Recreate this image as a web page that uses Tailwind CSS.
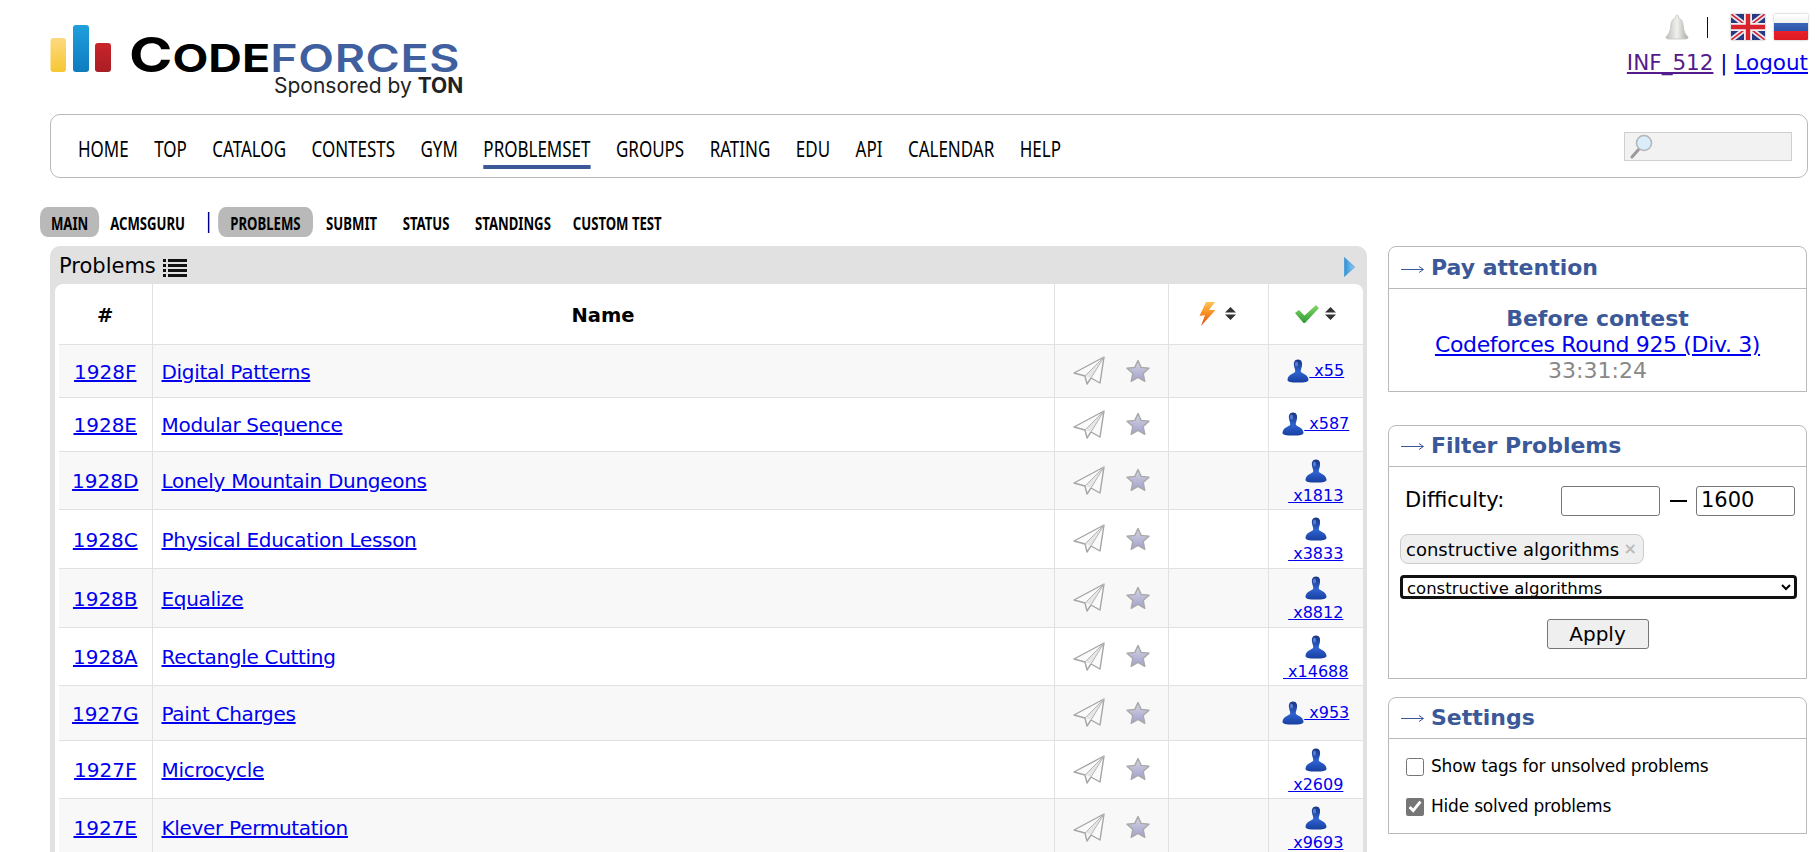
<!DOCTYPE html>
<html lang="en">
<head>
<meta charset="UTF-8" />
<title>Problemset - Codeforces</title>
<script src="https://cdn.jsdelivr.net/npm/@tailwindcss/browser@4"></script>
</head>
<body class="h-[852px] overflow-hidden bg-white text-black font-['DejaVu_Sans',Verdana,sans-serif]">

<!-- shared icons -->
<svg class="absolute w-0 h-0">
    <defs>
        <linearGradient id="gYellow" x1="0" y1="0" x2="0" y2="1"><stop offset="0" stop-color="#fdd97f"/><stop offset="1" stop-color="#f6c733"/></linearGradient>
        <linearGradient id="gBlue" x1="0" y1="0" x2="0" y2="1"><stop offset="0" stop-color="#1f9fdc"/><stop offset="1" stop-color="#0f7cbf"/></linearGradient>
        <linearGradient id="gRed" x1="0" y1="0" x2="0" y2="1"><stop offset="0" stop-color="#c9252b"/><stop offset="1" stop-color="#a81e24"/></linearGradient>
        <linearGradient id="gStar" x1="0" y1="0" x2="0" y2="1"><stop offset="0" stop-color="#d6d6df"/><stop offset="1" stop-color="#a0a0d0"/></linearGradient>
        <linearGradient id="gUser" x1="0" y1="0" x2="0" y2="1"><stop offset="0" stop-color="#173480"/><stop offset="0.55" stop-color="#2f62d0"/><stop offset="1" stop-color="#173f9f"/></linearGradient>
        <linearGradient id="gBolt" x1="0" y1="0" x2="0" y2="1"><stop offset="0" stop-color="#ffc45a"/><stop offset="0.5" stop-color="#f78a1e"/><stop offset="1" stop-color="#d9481a"/></linearGradient>
        <linearGradient id="gCheck" x1="0" y1="0" x2="0" y2="1"><stop offset="0" stop-color="#86d76c"/><stop offset="1" stop-color="#2f9a35"/></linearGradient>
        <linearGradient id="gBell" x1="0" y1="0" x2="1" y2="0"><stop offset="0" stop-color="#bdbdb9"/><stop offset="0.5" stop-color="#f0f0ee"/><stop offset="1" stop-color="#a9a9a5"/></linearGradient>
        <linearGradient id="gArrow" x1="0" y1="0" x2="1" y2="0"><stop offset="0" stop-color="#2f8fd8"/><stop offset="1" stop-color="#8ccdf5"/></linearGradient>
        <linearGradient id="gRu" x1="0" y1="0" x2="0" y2="1"><stop offset="0" stop-color="#fff"/><stop offset="0.33" stop-color="#f2f2f2"/><stop offset="0.34" stop-color="#3a66b8"/><stop offset="0.66" stop-color="#2b55a8"/><stop offset="0.67" stop-color="#e8202a"/><stop offset="1" stop-color="#dd1a22"/></linearGradient>
        <symbol id="plane" viewBox="0 0 32 29">
            <path d="M1 17 L31 1 L27 27 L18 22 L14 28 L12 20 Z" fill="#fafafa" stroke="#a5a5a5" stroke-width="1.4" stroke-linejoin="round"/>
            <path d="M12 20 L31 1 L18 22" fill="#e6e6e6" stroke="#b5b5b5" stroke-width="1"/>
        </symbol>
        <symbol id="star" viewBox="0 0 24 24">
            <path d="M12 1.5 L15.2 8.4 L23 9.3 L17.2 14.5 L18.8 22.3 L12 18.4 L5.2 22.3 L6.8 14.5 L1 9.3 L8.8 8.4 Z" fill="url(#gStar)" stroke="#a9a9a9" stroke-width="1.4" stroke-linejoin="round"/>
        </symbol>
        <symbol id="user" viewBox="0 0 22 24">
            <path d="M11 0.5 C14.5 0.5 15.5 3.5 15 6.5 C14.7 9 13.6 10.5 13.8 12.5 C14 14.5 21 15 21.5 20.5 C21.8 23 18 23.5 11 23.5 C4 23.5 0.2 23 0.5 20.5 C1 15 8 14.5 8.2 12.5 C8.4 10.5 7.3 9 7 6.5 C6.5 3.5 7.5 0.5 11 0.5 Z" fill="url(#gUser)"/>
            <ellipse cx="9.5" cy="5" rx="1.6" ry="2.6" fill="#6f93e6" opacity="0.7"/>
        </symbol>
        <symbol id="arrow" viewBox="0 0 23 9">
            <path d="M0 4.5 H22 M18 1.5 L22.5 4.5 L18 7.5" fill="none" stroke="#3b5998" stroke-width="1"/>
        </symbol>
    </defs>
</svg>

<div class="pl-[50px] pr-[10px] w-[1818px]">
    <!-- header -->
    <div class="flex justify-between h-[114px]">
        <div class="relative w-[420px]">
            <svg class="absolute left-0 top-[25px]" width="62" height="47" viewBox="0 0 62 47">
                <rect x="0.5" y="13" width="15.5" height="34" rx="3" fill="url(#gYellow)"/>
                <rect x="23" y="0" width="16" height="47" rx="3" fill="url(#gBlue)"/>
                <rect x="45" y="18" width="16" height="29" rx="3" fill="url(#gRed)"/>
            </svg>
            <div class="absolute left-[79px] top-[35px] origin-left scale-x-[1.225] flex items-baseline font-['Inter',sans-serif] leading-[40px] whitespace-nowrap">
                <span class="text-[48px] font-bold text-black">C</span><span class="text-[38px] font-bold text-black">ODE</span><span class="text-[38px] font-semibold text-[#3f5f9f] tracking-[0.5px]">FORCES</span>
            </div>
            <div class="absolute left-[224px] top-[74px] text-[21px] leading-[24px] font-['Inter',sans-serif] text-[#222] whitespace-nowrap">Sponsored by <b class="font-bold">TON</b></div>
        </div>
        <div class="flex flex-col items-end">
            <div class="flex items-center h-[40px] pt-[14px]">
                <svg width="24" height="26" viewBox="0 0 24 26">
                    <path d="M12 1 C13.2 1 13.5 2.5 13.4 4 C17 5 18 8 18.4 13 C18.7 17 20 20 23 23 C23.5 24 22 25 20 25 L4 25 C2 25 0.5 24 1 23 C4 20 5.3 17 5.6 13 C6 8 7 5 10.6 4 C10.5 2.5 10.8 1 12 1 Z" fill="url(#gBell)" stroke="#c4c4c0" stroke-width="0.8"/>
                </svg>
                <span class="w-[1px] h-[21px] bg-[#00008b] ml-[18px] mr-[23px]"></span>
                <svg class="rounded-[1px] shadow-[0_0_2px_#999]" width="34" height="26" viewBox="0 0 34 26">
                    <rect width="34" height="26" fill="#2a3a80"/>
                    <path d="M0 0 L34 26 M34 0 L0 26" stroke="#e8e8f0" stroke-width="5"/>
                    <path d="M0 0 L34 26 M34 0 L0 26" stroke="#d8222c" stroke-width="1.6"/>
                    <path d="M17 0 V26 M0 13 H34" stroke="#eef0f4" stroke-width="8"/>
                    <path d="M17 0 V26 M0 13 H34" stroke="#d8222c" stroke-width="4.4"/>
                </svg>
                <svg class="ml-[9px] rounded-[1px] shadow-[0_0_2px_#999]" width="34" height="26" viewBox="0 0 34 26">
                    <rect width="34" height="26" fill="url(#gRu)"/>
                </svg>
            </div>
            <div class="mt-[10px] text-[21.5px] leading-[26px] whitespace-nowrap">
                <a href="#" class="text-[#551a8b] underline">INF_512</a>
                <span class="text-[#00008b]">|</span>
                <a href="#" class="text-[#00e] underline">Logout</a>
            </div>
        </div>
    </div>

    <!-- main menu -->
    <div class="flex items-center justify-between h-[64px] border border-[#b9b9b9] rounded-[10px] pl-[27px] pr-[15px]">
        <nav class="flex gap-[33px] mt-[4px] origin-left scale-x-[.772] font-['Noto_Sans',sans-serif] text-[22px] whitespace-nowrap">
            <a href="#" class="h-[42px] leading-[42px]">HOME</a>
            <a href="#" class="h-[42px] leading-[42px]">TOP</a>
            <a href="#" class="h-[42px] leading-[42px]">CATALOG</a>
            <a href="#" class="h-[42px] leading-[42px]">CONTESTS</a>
            <a href="#" class="h-[42px] leading-[42px]">GYM</a>
            <a href="#" class="h-[42px] leading-[42px] border-b-4 border-[#3b5998]">PROBLEMSET</a>
            <a href="#" class="h-[42px] leading-[42px]">GROUPS</a>
            <a href="#" class="h-[42px] leading-[42px]">RATING</a>
            <a href="#" class="h-[42px] leading-[42px]">EDU</a>
            <a href="#" class="h-[42px] leading-[42px]">API</a>
            <a href="#" class="h-[42px] leading-[42px]">CALENDAR</a>
            <a href="#" class="h-[42px] leading-[42px]">HELP</a>
        </nav>
        <div class="flex items-center w-[168px] h-[29px] bg-[#f2f2f2] border border-[#cfcfcf]">
            <svg class="ml-[4px]" width="26" height="26" viewBox="0 0 26 26">
                <line x1="3" y1="24" x2="10" y2="16" stroke="#9a9a9a" stroke-width="3" stroke-linecap="round"/>
                <circle cx="15" cy="10" r="7.5" fill="#d9eefa" stroke="#b5b5b5" stroke-width="1.6"/>
            </svg>
        </div>
    </div>

    <!-- second level menu -->
    <div class="flex items-center h-[30px] mt-[29px] -ml-[10px] origin-left scale-x-[.73] font-['Noto_Sans',sans-serif] font-bold text-[18px] whitespace-nowrap">
        <a href="#" class="h-[30px] leading-[32px] px-[15px] rounded-[10px] bg-[#b9b9b9]">MAIN</a>
        <a href="#" class="h-[30px] leading-[32px] ml-[15px]">ACMSGURU</a>
        <span class="w-[2px] h-[21px] bg-[#00008b] ml-[31px] mr-[12px]"></span>
        <a href="#" class="h-[30px] leading-[32px] px-[17px] rounded-[10px] bg-[#b9b9b9]">PROBLEMS</a>
        <a href="#" class="h-[30px] leading-[32px] ml-[18px]">SUBMIT</a>
        <a href="#" class="h-[30px] leading-[32px] ml-[35px]">STATUS</a>
        <a href="#" class="h-[30px] leading-[32px] ml-[35px]">STANDINGS</a>
        <a href="#" class="h-[30px] leading-[32px] ml-[30px]">CUSTOM TEST</a>
    </div>

    <!-- content -->
    <div class="flex gap-[21px] mt-[9px]">
        <div class="w-[1317px] shrink-0 bg-[#e1e1e1] rounded-t-[10px] pl-[5px] pr-[4px] pb-[5px]">
            <div class="flex items-center justify-between h-[38px]">
                <div class="flex items-center pl-[4px] pt-[3px] text-[21px]">
                    Problems
                    <svg class="ml-[7px] mt-[2px]" width="24" height="19" viewBox="0 0 24 19">
                        <path d="M0 1 h3 v3 h-3 Z M5 1 h19 v3 h-19 Z M0 6 h3 v3 h-3 Z M5 6 h19 v3 h-19 Z M0 11 h3 v3 h-3 Z M5 11 h19 v3 h-19 Z M0 16 h3 v3 h-3 Z M5 16 h19 v3 h-19 Z" fill="#111"/>
                    </svg>
                </div>
                <svg class="mr-[8px] mt-[4px]" width="11" height="20" viewBox="0 0 11 20">
                    <path d="M0.5 0.5 L10.5 10 L0.5 19.5 Z" fill="url(#gArrow)" stroke="#4a9bd8" stroke-width="0.8"/>
                </svg>
            </div>
            <div class="bg-white rounded-t-[8px] pl-[4px]">
                <table class="w-[1304px] table-fixed border-collapse text-[20px]">
                    <colgroup>
                        <col class="w-[93px]"/><col class="w-[902px]"/><col class="w-[114px]"/><col class="w-[100px]"/><col class="w-[95px]"/>
                    </colgroup>
                    <thead>
                        <tr class="h-[60px]">
                            <th class="text-[19.5px] font-bold pt-[3px] border-r border-[#e1e1e1]">#</th>
                            <th class="text-[19.5px] font-bold pt-[3px] border-r border-[#e1e1e1]">Name</th>
                            <th class="border-r border-[#e1e1e1]"></th>
                            <th class="border-r border-[#e1e1e1]">
                                <div class="flex items-center justify-center gap-[9px] pr-[2px]">
                                    <svg width="17" height="24" viewBox="0 0 17 24"><path d="M7 0 L16 0 L10 8 L16.5 8 L2 24 L6 13 L0.5 14 Z" fill="url(#gBolt)"/></svg>
                                    <svg width="11" height="13" viewBox="0 0 11 13"><path d="M5.5 0 L11 5.5 H0 Z M0 7.5 H11 L5.5 13 Z" fill="#333"/></svg>
                                </div>
                            </th>
                            <th>
                                <div class="flex items-center justify-center gap-[6px] pr-[1px]">
                                    <svg width="24" height="18" viewBox="0 0 24 18"><path d="M0 8 L4 5 L9.5 10.5 L21 0 L24 3 L10 18 L8.5 18 Z" fill="url(#gCheck)"/></svg>
                                    <svg width="11" height="13" viewBox="0 0 11 13"><path d="M5.5 0 L11 5.5 H0 Z M0 7.5 H11 L5.5 13 Z" fill="#333"/></svg>
                                </div>
                            </th>
                        </tr>
                    </thead>
                    <tbody>
                        <tr class="h-[53px] bg-[#f8f8f8] border-t border-[#e1e1e1]">
                            <td class="text-center pt-[2px] border-r border-[#e1e1e1]"><a href="#" class="text-[#00e] underline">1928F</a></td>
                            <td class="pl-[9px] pt-[2px] tracking-[-0.3px] border-r border-[#e1e1e1]"><a href="#" class="text-[#00e] underline">Digital Patterns</a></td>
                            <td class="border-r border-[#e1e1e1]"><div class="flex items-center gap-[21px] pl-[18px]"><svg width="32" height="29"><use href="#plane"/></svg><svg width="24" height="24"><use href="#star"/></svg></div></td>
                            <td class="border-r border-[#e1e1e1]"></td>
                            <td class="text-[16px]"><a href="#" class="flex items-center justify-center text-[#00e]"><svg width="22" height="24"><use href="#user"/></svg><span class="underline whitespace-pre"> x55</span></a></td>
                        </tr>
                        <tr class="h-[54px] border-t border-[#e1e1e1]">
                            <td class="text-center pt-[2px] border-r border-[#e1e1e1]"><a href="#" class="text-[#00e] underline">1928E</a></td>
                            <td class="pl-[9px] pt-[2px] tracking-[-0.3px] border-r border-[#e1e1e1]"><a href="#" class="text-[#00e] underline">Modular Sequence</a></td>
                            <td class="border-r border-[#e1e1e1]"><div class="flex items-center gap-[21px] pl-[18px]"><svg width="32" height="29"><use href="#plane"/></svg><svg width="24" height="24"><use href="#star"/></svg></div></td>
                            <td class="border-r border-[#e1e1e1]"></td>
                            <td class="text-[16px]"><a href="#" class="flex items-center justify-center text-[#00e]"><svg width="22" height="24"><use href="#user"/></svg><span class="underline whitespace-pre"> x587</span></a></td>
                        </tr>
                        <tr class="h-[58px] bg-[#f8f8f8] border-t border-[#e1e1e1]">
                            <td class="text-center pt-[2px] border-r border-[#e1e1e1]"><a href="#" class="text-[#00e] underline">1928D</a></td>
                            <td class="pl-[9px] pt-[2px] tracking-[-0.3px] border-r border-[#e1e1e1]"><a href="#" class="text-[#00e] underline">Lonely Mountain Dungeons</a></td>
                            <td class="border-r border-[#e1e1e1]"><div class="flex items-center gap-[21px] pl-[18px]"><svg width="32" height="29"><use href="#plane"/></svg><svg width="24" height="24"><use href="#star"/></svg></div></td>
                            <td class="border-r border-[#e1e1e1]"></td>
                            <td class="text-[16px] pt-[4px]"><a href="#" class="flex flex-col items-center text-[#00e] leading-[20px]"><svg width="22" height="24"><use href="#user"/></svg><span class="underline whitespace-pre mt-[3px]"> x1813</span></a></td>
                        </tr>
                        <tr class="h-[59px] border-t border-[#e1e1e1]">
                            <td class="text-center pt-[2px] border-r border-[#e1e1e1]"><a href="#" class="text-[#00e] underline">1928C</a></td>
                            <td class="pl-[9px] pt-[2px] tracking-[-0.3px] border-r border-[#e1e1e1]"><a href="#" class="text-[#00e] underline">Physical Education Lesson</a></td>
                            <td class="border-r border-[#e1e1e1]"><div class="flex items-center gap-[21px] pl-[18px]"><svg width="32" height="29"><use href="#plane"/></svg><svg width="24" height="24"><use href="#star"/></svg></div></td>
                            <td class="border-r border-[#e1e1e1]"></td>
                            <td class="text-[16px] pt-[4px]"><a href="#" class="flex flex-col items-center text-[#00e] leading-[20px]"><svg width="22" height="24"><use href="#user"/></svg><span class="underline whitespace-pre mt-[3px]"> x3833</span></a></td>
                        </tr>
                        <tr class="h-[59px] bg-[#f8f8f8] border-t border-[#e1e1e1]">
                            <td class="text-center pt-[2px] border-r border-[#e1e1e1]"><a href="#" class="text-[#00e] underline">1928B</a></td>
                            <td class="pl-[9px] pt-[2px] tracking-[-0.3px] border-r border-[#e1e1e1]"><a href="#" class="text-[#00e] underline">Equalize</a></td>
                            <td class="border-r border-[#e1e1e1]"><div class="flex items-center gap-[21px] pl-[18px]"><svg width="32" height="29"><use href="#plane"/></svg><svg width="24" height="24"><use href="#star"/></svg></div></td>
                            <td class="border-r border-[#e1e1e1]"></td>
                            <td class="text-[16px] pt-[4px]"><a href="#" class="flex flex-col items-center text-[#00e] leading-[20px]"><svg width="22" height="24"><use href="#user"/></svg><span class="underline whitespace-pre mt-[3px]"> x8812</span></a></td>
                        </tr>
                        <tr class="h-[58px] border-t border-[#e1e1e1]">
                            <td class="text-center pt-[2px] border-r border-[#e1e1e1]"><a href="#" class="text-[#00e] underline">1928A</a></td>
                            <td class="pl-[9px] pt-[2px] tracking-[-0.3px] border-r border-[#e1e1e1]"><a href="#" class="text-[#00e] underline">Rectangle Cutting</a></td>
                            <td class="border-r border-[#e1e1e1]"><div class="flex items-center gap-[21px] pl-[18px]"><svg width="32" height="29"><use href="#plane"/></svg><svg width="24" height="24"><use href="#star"/></svg></div></td>
                            <td class="border-r border-[#e1e1e1]"></td>
                            <td class="text-[16px] pt-[4px]"><a href="#" class="flex flex-col items-center text-[#00e] leading-[20px]"><svg width="22" height="24"><use href="#user"/></svg><span class="underline whitespace-pre mt-[3px]"> x14688</span></a></td>
                        </tr>
                        <tr class="h-[55px] bg-[#f8f8f8] border-t border-[#e1e1e1]">
                            <td class="text-center pt-[2px] border-r border-[#e1e1e1]"><a href="#" class="text-[#00e] underline">1927G</a></td>
                            <td class="pl-[9px] pt-[2px] tracking-[-0.3px] border-r border-[#e1e1e1]"><a href="#" class="text-[#00e] underline">Paint Charges</a></td>
                            <td class="border-r border-[#e1e1e1]"><div class="flex items-center gap-[21px] pl-[18px]"><svg width="32" height="29"><use href="#plane"/></svg><svg width="24" height="24"><use href="#star"/></svg></div></td>
                            <td class="border-r border-[#e1e1e1]"></td>
                            <td class="text-[16px]"><a href="#" class="flex items-center justify-center text-[#00e]"><svg width="22" height="24"><use href="#user"/></svg><span class="underline whitespace-pre"> x953</span></a></td>
                        </tr>
                        <tr class="h-[58px] border-t border-[#e1e1e1]">
                            <td class="text-center pt-[2px] border-r border-[#e1e1e1]"><a href="#" class="text-[#00e] underline">1927F</a></td>
                            <td class="pl-[9px] pt-[2px] tracking-[-0.3px] border-r border-[#e1e1e1]"><a href="#" class="text-[#00e] underline">Microcycle</a></td>
                            <td class="border-r border-[#e1e1e1]"><div class="flex items-center gap-[21px] pl-[18px]"><svg width="32" height="29"><use href="#plane"/></svg><svg width="24" height="24"><use href="#star"/></svg></div></td>
                            <td class="border-r border-[#e1e1e1]"></td>
                            <td class="text-[16px] pt-[4px]"><a href="#" class="flex flex-col items-center text-[#00e] leading-[20px]"><svg width="22" height="24"><use href="#user"/></svg><span class="underline whitespace-pre mt-[3px]"> x2609</span></a></td>
                        </tr>
                        <tr class="h-[58px] bg-[#f8f8f8] border-t border-[#e1e1e1]">
                            <td class="text-center pt-[2px] border-r border-[#e1e1e1]"><a href="#" class="text-[#00e] underline">1927E</a></td>
                            <td class="pl-[9px] pt-[2px] tracking-[-0.3px] border-r border-[#e1e1e1]"><a href="#" class="text-[#00e] underline">Klever Permutation</a></td>
                            <td class="border-r border-[#e1e1e1]"><div class="flex items-center gap-[21px] pl-[18px]"><svg width="32" height="29"><use href="#plane"/></svg><svg width="24" height="24"><use href="#star"/></svg></div></td>
                            <td class="border-r border-[#e1e1e1]"></td>
                            <td class="text-[16px] pt-[4px]"><a href="#" class="flex flex-col items-center text-[#00e] leading-[20px]"><svg width="22" height="24"><use href="#user"/></svg><span class="underline whitespace-pre mt-[3px]"> x9693</span></a></td>
                        </tr>
                    </tbody>
                </table>
            </div>
        </div>

        <!-- sidebar -->
        <div class="w-[419px] shrink-0 flex flex-col gap-[33px]">
            <div class="h-[146px] border border-[#b9b9b9] rounded-t-[8px]">
                <div class="flex items-center h-[42px] pl-[12px] border-b border-[#b9b9b9] text-[#3b5998]">
                    <svg class="mr-[7px] mt-[3px]" width="23" height="9"><use href="#arrow"/></svg>
                    <span class="text-[22px] font-bold">Pay attention</span>
                </div>
                <div class="text-center pt-[17px] text-[22px] leading-[26px]">
                    <div class="font-bold text-[#3b5998]">Before contest</div>
                    <a href="#" class="text-[#00e] underline tracking-[-0.35px]">Codeforces Round 925 (Div. 3)</a>
                    <div class="text-[#888]">33:31:24</div>
                </div>
            </div>
            <div class="h-[254px] border border-[#b9b9b9] rounded-t-[8px]">
                <div class="flex items-center h-[41px] pl-[12px] pb-[2px] border-b border-[#b9b9b9] text-[#3b5998]">
                    <svg class="mr-[7px] mt-[3px]" width="23" height="9"><use href="#arrow"/></svg>
                    <span class="text-[22px] font-bold">Filter Problems</span>
                </div>
                <div class="px-[11px] pt-[19px]">
                    <div class="flex items-center text-[21px] h-[30px]">
                        <span class="pl-[5px] w-[166px]">Difficulty:</span>
                        <input class="w-[99px] h-[30px] border border-[#767676] rounded-[3px] px-[4px]" />
                        <span class="w-[37px] h-[2px] flex justify-center"><span class="w-[17px] h-[2px] bg-black"></span></span>
                        <input class="w-[99px] h-[30px] border border-[#767676] rounded-[3px] px-[4px]" value="1600" />
                    </div>
                    <div class="mt-[18px] w-[244px] h-[30px] flex items-center justify-between px-[5px] bg-[#efefef] border border-[#ccc] rounded-[8px] text-[18px]">
                        <span>constructive algorithms</span>
                        <span class="text-[#bbb] text-[16px] font-bold pr-[1px]">&times;</span>
                    </div>
                    <select class="block mt-[11px] w-[397px] h-[24px] border-[3px] border-[#111] rounded-[4px] text-[16.5px] pl-0 leading-[18px]">
                        <option>constructive algorithms</option>
                    </select>
                    <div class="flex justify-center mt-[20px]">
                        <button class="w-[102px] h-[30px] bg-[#efefef] border border-[#767676] rounded-[3px] text-[20px] leading-[28px]">Apply</button>
                    </div>
                </div>
            </div>
            <div class="-mt-[15px] h-[137px] border border-[#b9b9b9] rounded-t-[8px]">
                <div class="flex items-center h-[41px] pl-[12px] pb-[2px] border-b border-[#b9b9b9] text-[#3b5998]">
                    <svg class="mr-[7px] mt-[3px]" width="23" height="9"><use href="#arrow"/></svg>
                    <span class="text-[22px] font-bold">Settings</span>
                </div>
                <div class="pl-[17px] pt-[18px] text-[17px] tracking-[-0.2px]">
                    <label class="flex items-center h-[20px] gap-[7px]"><input type="checkbox" class="w-[18px] h-[18px] accent-[#767676]" />Show tags for unsolved problems</label>
                    <label class="flex items-center h-[20px] gap-[7px] mt-[20px]"><input type="checkbox" checked class="w-[18px] h-[18px] accent-[#767676]" />Hide solved problems</label>
                </div>
            </div>
        </div>
    </div>
</div>
</body>
</html>
